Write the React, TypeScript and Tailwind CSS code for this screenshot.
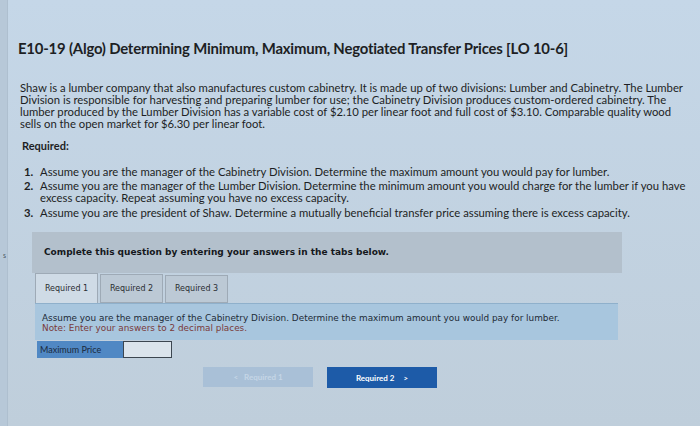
import React from "react";

export default function App() {
  const body = { fontFamily: "Lato, 'Open Sans', sans-serif" };
  const verd = { fontFamily: "'DejaVu Sans', Verdana, sans-serif" };
  return (
    <div className="w-[700px] h-[426px] overflow-hidden bg-gradient-to-b from-[#c5d7e8] to-[#bfcedb] flex text-[#1d1f24]" style={body}>
      <div className="w-[8px] shrink-0 bg-[#b7c8d8] border-r border-[#aebfcf] flex flex-col">
        <div className="h-[250px]" />
        <span className="text-[7px] text-[#4a5663] pl-[3px]">s</span>
      </div>
      <div className="flex-1 flex flex-col pl-[10px]">
        <h1 className="mt-[38px] text-[14.9px] font-bold tracking-[-0.2px] leading-[20px]">
          E10-19 (Algo) Determining Minimum, Maximum, Negotiated Transfer Prices [LO 10-6]
        </h1>
        <p className="mt-[24px] pl-[2px] pr-[10px] text-[11.3px] leading-[12px]">
          Shaw is a lumber company that also manufactures custom cabinetry. It is made up of two divisions: Lumber and Cabinetry. The Lumber Division is responsible for harvesting and preparing lumber for use; the Cabinetry Division produces custom-ordered cabinetry. The lumber produced by the Lumber Division has a variable cost of $2.10 per linear foot and full cost of $3.10. Comparable quality wood sells on the open market for $6.30 per linear foot.
        </p>
        <div className="mt-[9px] pl-[4px] text-[11px] font-bold leading-[14px]">Required:</div>
        <ol className="mt-[13px] pl-[6px] pr-[12px] text-[11.3px] leading-[12px] flex flex-col gap-[2px]">
          <li className="flex"><span className="w-[16px] shrink-0 font-bold">1.</span><span>Assume you are the manager of the Cabinetry Division. Determine the maximum amount you would pay for lumber.</span></li>
          <li className="flex"><span className="w-[16px] shrink-0 font-bold">2.</span><span>Assume you are the manager of the Lumber Division. Determine the minimum amount you would charge for the lumber if you have excess capacity. Repeat assuming you have no excess capacity.</span></li>
          <li className="flex mt-[1px]"><span className="w-[16px] shrink-0 font-bold">3.</span><span>Assume you are the president of Shaw. Determine a mutually beneficial transfer price assuming there is excess capacity.</span></li>
        </ol>
        <div className="mt-[13px] ml-[14px] w-[590px] h-[41px] bg-[#b3c0cc] flex items-center pl-[12px] text-[9px] font-bold text-[#15181c]" style={verd}>
          Complete this question by entering your answers in the tabs below.
        </div>
        <div className="ml-[17px] flex items-end gap-[2px]" style={verd}>
          <div className="w-[63px] h-[30px] bg-[#cfdbe6] border border-b-0 border-[#9eaab6] flex items-center justify-center text-[8px] text-[#2a2e33]">Required 1</div>
          <div className="w-[63px] h-[29px] bg-[#bcc9d5] border border-[#9eaab6] flex items-center justify-center text-[8px] text-[#2a2e33]">Required 2</div>
          <div className="w-[63px] h-[28px] bg-[#bcc9d5] border border-[#9eaab6] flex items-center justify-center text-[8px] text-[#2a2e33]">Required 3</div>
        </div>
        <div className="ml-[17px] w-[583px] h-[37px] bg-[#a8c6de] border-t border-[#8fb0cb] flex flex-col justify-center pl-[7px] pt-[2px] text-[8.9px] leading-[10px]" style={verd}>
          <div className="text-[#1d2a36]">Assume you are the manager of the Cabinetry Division. Determine the maximum amount you would pay for lumber.</div>
          <div className="text-[#7a3a3a]">Note: Enter your answers to 2 decimal places.</div>
        </div>
        <div className="ml-[19px] mt-[1px] flex h-[17px]">
          <div className="w-[86px] bg-[#5088c4] text-[9px] text-[#1b2a3c] flex items-center pl-[3px]" style={body}>Maximum Price</div>
          <div className="w-[49px] bg-[#dbe4ec] border border-[#3c4650]" />
        </div>
        <div className="mt-[9px] ml-[185px] flex gap-[14px] text-[8px] font-bold">
          <div className="w-[110px] h-[20px] bg-[#a9c0d7] flex items-center justify-center gap-[6px] text-[#c5d6e6]">
            <span>&lt;</span><span>Required 1</span>
          </div>
          <div className="w-[110px] h-[21px] bg-[#1d5ba8] flex items-center justify-center gap-[9px] text-white">
            <span>Required 2</span><span>&gt;</span>
          </div>
        </div>
      </div>
    </div>
  );
}
